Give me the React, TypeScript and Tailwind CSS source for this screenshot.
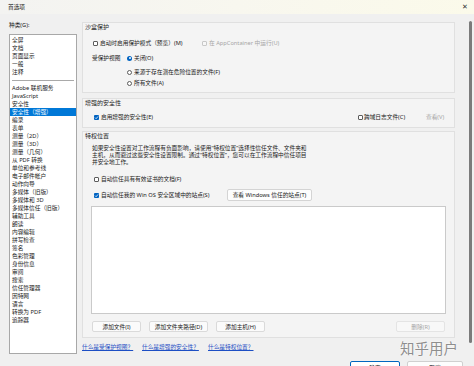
import React from "react";

const Check = ({ checked, disabled }: { checked?: boolean; disabled?: boolean }) =>
  checked ? (
    <span className="w-[5px] h-[5px] rounded-[1px] bg-[#0063c1] flex items-center justify-center shrink-0">
      <svg width="5" height="5" viewBox="0 0 10 10">
        <path d="M2 5.2 L4.2 7.4 L8.2 2.8" stroke="white" strokeWidth="1.6" fill="none" />
      </svg>
    </span>
  ) : disabled ? (
    <span className="w-[5px] h-[5px] rounded-[1px] border border-[#c8c8c8] bg-[#f7f7f7] shrink-0" />
  ) : (
    <span className="w-[5px] h-[5px] rounded-[1px] border border-[#5c5c5c] bg-white shrink-0" />
  );

const Radio = ({ on }: { on?: boolean }) =>
  on ? (
    <span className="w-[5px] h-[5px] rounded-full bg-[#0063c1] flex items-center justify-center shrink-0">
      <span className="w-[2px] h-[2px] rounded-full bg-white" />
    </span>
  ) : (
    <span className="w-[5px] h-[5px] rounded-full border border-[#5c5c5c] bg-white shrink-0" />
  );

const items: string[] = [
  "全屏",
  "文档",
  "页面显示",
  "一般",
  "注释",
  "---",
  "Adobe 联机服务",
  "JavaScript",
  "安全性",
  "安全性（增强）",
  "编录",
  "表单",
  "测量（2D）",
  "测量（3D）",
  "测量（几何）",
  "从 PDF 转换",
  "单位和参考线",
  "电子邮件帐户",
  "动作向导",
  "多媒体（旧版）",
  "多媒体和 3D",
  "多媒体信任（旧版）",
  "辅助工具",
  "朗读",
  "内容编辑",
  "拼写检查",
  "签名",
  "色彩管理",
  "身份信息",
  "审阅",
  "搜索",
  "信任管理器",
  "因特网",
  "语言",
  "转换为 PDF",
  "追踪器",
];

export default function App() {
  return (
    <div className="relative w-[474px] h-[366px] overflow-hidden bg-[#f0f0f0] text-[#1a1a1a] text-[5.7px] leading-[8px] font-['Noto_Sans','Noto_Sans_CJK_SC',sans-serif]">
      {/* title bar */}
      <div className="h-[14px] flex items-center justify-between pl-[8px] pr-[6px] bg-gradient-to-r from-[#f3f3f1] via-[#f8f7ef] to-[#fbfaea]">
        <span>首选项</span>
        <span className="text-[7px] leading-[8px] text-[#333]">✕</span>
      </div>

      <div className="flex h-[342px]">
        {/* left category list */}
        <div className="w-[82px] shrink-0 pl-[9px] pt-[7px]">
          <div className="h-[8px]">种类(G):</div>
          <div className="mt-[5px] w-[68px] h-[320px] bg-white border border-[#a8a8a8] pt-px">
            {items.map((it, i) =>
              it === "---" ? (
                <div key={i} className="h-[8px] flex items-center px-[2px]">
                  <div className="h-px w-full bg-[#a9a9a9]" />
                </div>
              ) : it === "安全性（增强）" ? (
                <div key={i} className="h-[8px] pl-[2px] bg-[#0078d7] text-white whitespace-nowrap">
                  {it}
                </div>
              ) : (
                <div key={i} className="h-[8px] pl-[2px] whitespace-nowrap">
                  {it}
                </div>
              )
            )}
          </div>
        </div>

        {/* right panel */}
        <div className="w-[373px] shrink-0">
          {/* 沙盒保护 */}
          <div className="mt-[8px] h-[71px] border border-[#e0e0e0] bg-[#f4f4f4]">
            <div className="h-[8px] pl-[2px] text-[6px]">沙盒保护</div>
            <div className="mt-[8px] h-[8px] flex items-center pl-[10px]">
              <div className="w-[109px] flex items-center gap-[2px] whitespace-nowrap">
                <Check />
                <span>启动时启用保护模式（预览）(M)</span>
              </div>
              <div className="flex items-center gap-[2px] whitespace-nowrap text-[#a6a6a6]">
                <Check disabled />
                <span>在 AppContainer 中运行(U)</span>
              </div>
            </div>
            <div className="mt-[7px] h-[8px] flex items-center pl-[9px]">
              <span className="w-[35px]">受保护视图</span>
              <div className="flex items-center gap-[2px]">
                <Radio on />
                <span>关闭(O)</span>
              </div>
            </div>
            <div className="mt-[6px] h-[8px] flex items-center pl-[44px] gap-[2px]">
              <Radio />
              <span>来源于存在潜在危险位置的文件(F)</span>
            </div>
            <div className="mt-[3px] h-[8px] flex items-center pl-[44px] gap-[2px]">
              <Radio />
              <span>所有文件(A)</span>
            </div>
          </div>

          {/* 增强的安全性 */}
          <div className="mt-[5px] h-[30px] border border-[#e0e0e0] bg-[#f4f4f4]">
            <div className="h-[8px] pl-[2px] text-[6px]">增强的安全性</div>
            <div className="mt-[6px] h-[8px] flex items-center pl-[11px]">
              <div className="w-[264px] flex items-center gap-[2px] whitespace-nowrap">
                <Check checked />
                <span>启用增强的安全性(E)</span>
              </div>
              <div className="w-[68px] flex items-center gap-[1px] whitespace-nowrap">
                <Check />
                <span>跨域日志文件(C)</span>
              </div>
              <span className="text-[#a6a6a6]">查看(V)</span>
            </div>
          </div>

          {/* 特权位置 */}
          <div className="mt-[3px] h-[207px] border border-[#e0e0e0] bg-[#f4f4f4]">
            <div className="h-[8px] pl-[2px] text-[6px]">特权位置</div>
            <div className="mt-[5px] pl-[9px] leading-[7px] whitespace-nowrap">
              <div>如果安全性设置对工作流程有负面影响，请使用“特权位置”选择性信任文件、文件夹和</div>
              <div>主机，从而避过这些安全性设置限制。通过“特权位置”，您可以在工作流程中信任项目</div>
              <div>并安全地工作。</div>
            </div>
            <div className="mt-[9px] h-[8px] flex items-center pl-[11px] gap-[2px]">
              <Check />
              <span>自动信任具有有效证书的文档(F)</span>
            </div>
            <div className="mt-[6px] h-[12px] flex items-center pl-[11px]">
              <div className="w-[133px] flex items-center gap-[2px] whitespace-nowrap">
                <Check checked />
                <span>自动信任我的 Win OS 安全区域中的站点(S)</span>
              </div>
              <div className="w-[85px] h-[12px] flex items-center justify-center bg-[#fdfdfd] border border-[#d4d4d4] rounded-[2px] whitespace-nowrap">
                查看 Windows 信任的站点(T)
              </div>
            </div>
            <div className="mt-[5px] ml-[8px] w-[355px] h-[108px] bg-white border border-[#cacaca]" />
            <div className="mt-[7px] h-[11px] flex pl-[9px]">
              <div className="w-[49px] h-[11px] flex items-center justify-center bg-[#fbfbfb] border border-[#dadada] rounded-[2px]">
                添加文件(I)
              </div>
              <div className="ml-[8px] w-[59px] h-[11px] flex items-center justify-center bg-[#fbfbfb] border border-[#dadada] rounded-[2px]">
                添加文件夹路径(D)
              </div>
              <div className="ml-[8px] w-[49px] h-[11px] flex items-center justify-center bg-[#fbfbfb] border border-[#dadada] rounded-[2px]">
                添加主机(H)
              </div>
              <div className="ml-[131px] w-[49px] h-[11px] flex items-center justify-center bg-[#f8f8f8] border border-[#e4e4e4] rounded-[2px] text-[#a6a6a6]">
                删除(R)
              </div>
            </div>
          </div>

          {/* help links */}
          <div className="mt-[5px] h-[8px] flex text-[#1d4fc4] whitespace-nowrap">
            <span className="w-[60px]"><span className="underline">什么是受保护视图？</span></span>
            <span className="w-[66px]"><span className="underline">什么是增强的安全性？</span></span>
            <span className="underline">什么是特权位置？</span>
          </div>
        </div>

        {/* scrollbar */}
        <div className="ml-[14px] mt-[7px] w-[2.5px] h-[322px] rounded-full bg-[#7b7b7b]" />
      </div>

      {/* footer */}
      <div className="pt-[5px] flex justify-end pr-[11px] gap-[7px]">
        <div className="w-[50px] h-[14px] pt-[2px] text-center bg-white border border-[#0067c0] rounded-[2px]">确定</div>
        <div className="w-[56px] h-[14px] pt-[2px] text-center bg-[#fdfdfd] border border-[#d0d0d0] rounded-[2px]">取消</div>
      </div>

      {/* watermark */}
      <div className="absolute left-[400px] top-[339px] text-[14.5px] leading-[18px] text-[#8e8e8e] font-['Noto_Sans_CJK_SC',sans-serif] [text-shadow:0_0_2px_#fff,0_0_1px_#fff]">
        知乎用户
      </div>
    </div>
  );
}
